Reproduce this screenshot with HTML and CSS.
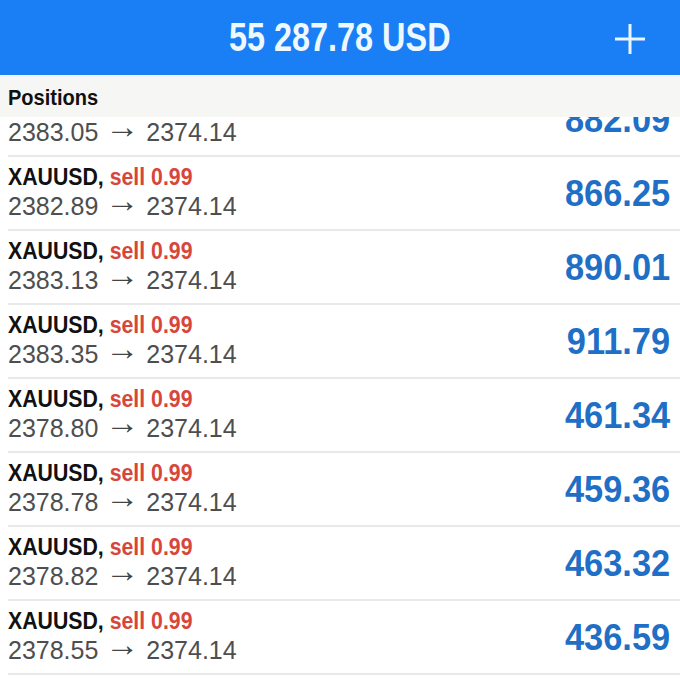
FILE: index.html
```html
<!DOCTYPE html>
<html>
<head>
<meta charset="utf-8">
<link rel="stylesheet" href="styles.css">
</head>
<body>
<header class="topbar">
  <span></span>
  <h1 class="balance">55 287.78 USD</h1>
  <svg class="plus" width="32" height="32" viewBox="0 0 32 32"><path d="M16 1V31M1 16H31" stroke="#eaf6ff" stroke-width="3" fill="none"/></svg>
</header>
<div class="section"><span class="section-title">Positions</span></div>
<div class="list">
  <div class="row first">
    <div class="info"><div class="sym">XAUUSD, <span class="sell">sell 0.99</span></div><div class="prices">2383.05 <span class="arrow">→</span> 2374.14</div></div>
    <div class="profit">882.09</div>
  </div>
  <div class="row">
    <div class="info"><div class="sym">XAUUSD, <span class="sell">sell 0.99</span></div><div class="prices">2382.89 <span class="arrow">→</span> 2374.14</div></div>
    <div class="profit">866.25</div>
  </div>
  <div class="row">
    <div class="info"><div class="sym">XAUUSD, <span class="sell">sell 0.99</span></div><div class="prices">2383.13 <span class="arrow">→</span> 2374.14</div></div>
    <div class="profit">890.01</div>
  </div>
  <div class="row">
    <div class="info"><div class="sym">XAUUSD, <span class="sell">sell 0.99</span></div><div class="prices">2383.35 <span class="arrow">→</span> 2374.14</div></div>
    <div class="profit">911.79</div>
  </div>
  <div class="row">
    <div class="info"><div class="sym">XAUUSD, <span class="sell">sell 0.99</span></div><div class="prices">2378.80 <span class="arrow">→</span> 2374.14</div></div>
    <div class="profit">461.34</div>
  </div>
  <div class="row">
    <div class="info"><div class="sym">XAUUSD, <span class="sell">sell 0.99</span></div><div class="prices">2378.78 <span class="arrow">→</span> 2374.14</div></div>
    <div class="profit">459.36</div>
  </div>
  <div class="row">
    <div class="info"><div class="sym">XAUUSD, <span class="sell">sell 0.99</span></div><div class="prices">2378.82 <span class="arrow">→</span> 2374.14</div></div>
    <div class="profit">463.32</div>
  </div>
  <div class="row">
    <div class="info"><div class="sym">XAUUSD, <span class="sell">sell 0.99</span></div><div class="prices">2378.55 <span class="arrow">→</span> 2374.14</div></div>
    <div class="profit">436.59</div>
  </div>
  <div class="row">
    <div class="info"><div class="sym">XAUUSD, <span class="sell">sell 0.99</span></div><div class="prices">2378.60 <span class="arrow">→</span> 2374.14</div></div>
    <div class="profit">441.54</div>
  </div>
</div>
</body>
</html>
```
FILE: styles.css
```css
html, body {
  margin: 0;
  padding: 0;
  background: #ffffff;
  font-family: "Liberation Sans", Arial, sans-serif;
  width: 680px;
  height: 680px;
  overflow: hidden;
}
.topbar {
  height: 75px;
  background: #1a7ff4;
  border-bottom: 2px solid #eef5fc;
  display: grid;
  grid-template-columns: 1fr auto 1fr;
  align-items: center;
}
.balance {
  margin: 0;
  font-weight: bold;
  font-size: 40px;
  line-height: 75px;
  color: #eef9ff;
  transform: scaleX(0.81);
  transform-origin: center;
}
.plus {
  justify-self: end;
  margin-right: 34px;
  margin-top: 2px;
}
.section {
  height: 40px;
  background: #f6f6f4;
  padding-left: 8px;
}
.section-title {
  display: inline-block;
  font-weight: bold;
  font-size: 22px;
  line-height: 42px;
  color: #111;
  transform: scaleX(0.91);
  transform-origin: left center;
}
.list {
  height: 563px;
  overflow: hidden;
}
.row {
  margin-left: 8px;
  height: 72px;
  border-bottom: 2px solid #e9e9e9;
  display: flex;
  align-items: center;
  justify-content: space-between;
  padding-right: 10px;
}
.row.first {
  margin-top: -34px;
}
.info {
  align-self: flex-start;
  padding-top: 6px;
}
.sym {
  font-weight: bold;
  font-size: 23px;
  line-height: 28px;
  color: #111;
  white-space: nowrap;
  transform: scaleX(0.925);
  transform-origin: left center;
}
.sell {
  color: #d8453b;
}
.prices {
  font-size: 25px;
  line-height: 31px;
  color: #4e4e4e;
  white-space: nowrap;
}
.arrow {
  font-size: 34px;
  line-height: 0;
  vertical-align: 3px;
  color: #444;
}
.profit {
  font-weight: bold;
  font-size: 37px;
  color: #1f6fc6;
  margin-top: 2px;
  transform: scaleX(0.93);
  transform-origin: right center;
}
```
